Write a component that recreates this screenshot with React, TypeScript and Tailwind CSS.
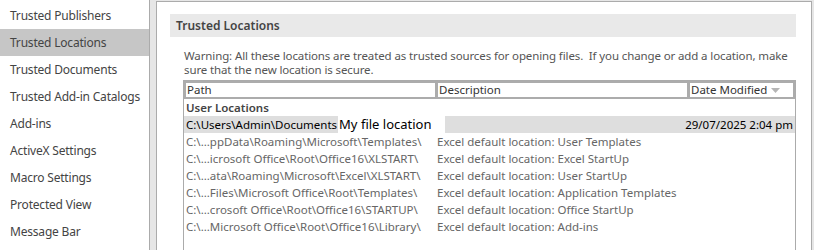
import React from "react";

const navItems = [
  "Trusted Publishers",
  "Trusted Locations",
  "Trusted Documents",
  "Trusted Add-in Catalogs",
  "Add-ins",
  "ActiveX Settings",
  "Macro Settings",
  "Protected View",
  "Message Bar",
];

const locations = [
  ["C:\\...ppData\\Roaming\\Microsoft\\Templates\\", "Excel default location: User Templates"],
  ["C:\\...icrosoft Office\\Root\\Office16\\XLSTART\\", "Excel default location: Excel StartUp"],
  ["C:\\...ata\\Roaming\\Microsoft\\Excel\\XLSTART\\", "Excel default location: User StartUp"],
  ["C:\\...Files\\Microsoft Office\\Root\\Templates\\", "Excel default location: Application Templates"],
  ["C:\\...crosoft Office\\Root\\Office16\\STARTUP\\", "Excel default location: Office StartUp"],
  ["C:\\...Microsoft Office\\Root\\Office16\\Library\\", "Excel default location: Add-ins"],
];

const App = () => {
  return (
    <div className="w-[814px] h-[250px] overflow-hidden flex bg-[#e6e6e6] font-['Noto_Sans',sans-serif] text-[11.5px]">
      {/* sidebar */}
      <div className="w-[150px] shrink-0 bg-white border-r border-[#ababab] pt-[2px] text-[12px] tracking-[-0.2px]">
        {navItems.map((name) => (
          <div
            key={name}
            className={
              "h-[27px] flex items-center pl-[10px] text-[#444] " +
              (name === "Trusted Locations" ? "bg-[#c6c6c6]" : "")
            }
          >
            {name}
          </div>
        ))}
      </div>

      {/* main panel */}
      <div className="ml-[6px] mt-[1px] w-[656px] h-[260px] bg-white border border-[#ababab] pt-[12px] pl-[13px] pr-[15px]">
        <div className="h-[23px] bg-[#e9e9e9] flex items-center pl-[6px] font-semibold text-[12px] text-[#444]">
          Trusted Locations
        </div>
        <div className="pl-[14px] pt-[12px] text-[#555] leading-[14px] whitespace-nowrap tracking-[-0.12px]">
          <p>
            Warning: All these locations are treated as trusted sources for opening files.&nbsp; If you change or add a location, make
            <br />
            sure that the new location is secure.
          </p>
        </div>

        <div className="ml-[13px] mt-[3px] border border-[#ababab] h-[200px]">
          <div className="grid grid-cols-[249px_249px_1fr] gap-[3px] bg-[#acacac] p-[2px]">
            <div className="bg-white h-[14px] leading-[14px] pl-[1px] text-[#333]">Path</div>
            <div className="bg-white h-[14px] leading-[14px] pl-[1px] text-[#333]">Description</div>
            <div className="bg-white h-[14px] leading-[14px] pl-[1px] text-[#333] flex items-center">
              Date Modified
              <svg width="9" height="5" viewBox="0 0 9 5" className="ml-[4px]">
                <path d="M0 0h9L4.5 5z" fill="#b5b5b5" />
              </svg>
            </div>
          </div>

          <div className="h-[17px] leading-[17px] pl-[2px] font-semibold text-[#444]">User Locations</div>

          <div className="flex h-[17px] items-center">
            <div className="bg-[#dedede] h-[17px] leading-[17px] pl-[2px] pr-[1px] text-black whitespace-nowrap">
              C:\Users\Admin\Documents
            </div>
            <div className="w-[107px] pl-[1px] text-[13px] text-black leading-[17px] whitespace-nowrap">My file location</div>
            <div className="flex-1 bg-[#dedede] h-[17px] leading-[17px] text-right pr-[2px] text-black">
              29/07/2025 2:04 pm
            </div>
          </div>

          {locations.map(([path, desc]) => (
            <div key={path} className="grid grid-cols-[253px_1fr] h-[17px] leading-[17px] text-[#666]">
              <div className="pl-[2px] whitespace-nowrap">{path}</div>
              <div className="whitespace-nowrap">{desc}</div>
            </div>
          ))}
        </div>
      </div>
    </div>
  );
};

export default App;
